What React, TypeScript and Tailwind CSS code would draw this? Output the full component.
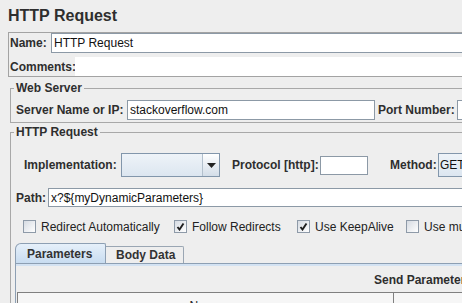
import React from "react";

const input = "border border-[#8c99a6] bg-white px-[2px] text-[12px] leading-[16px] font-normal text-[#111]";

function Check({ on, label, w }: { on?: boolean; label: string; w: string }) {
  return (
    <div className={`flex shrink-0 items-center gap-[5px] ${w}`}>
      <span className="flex h-[13px] w-[13px] shrink-0 items-end justify-center border border-[#8e9aa8] bg-gradient-to-br from-[#d6dbe2] to-white pb-[1px]">
        {on && (
          <svg width="9" height="9" viewBox="0 0 9 9">
            <path d="M1.5 5 L3.5 7.5 L7.5 1.5" fill="none" stroke="#1e1e1e" strokeWidth="1.9" />
          </svg>
        )}
      </span>
      <span className="whitespace-nowrap font-normal text-[#222]">{label}</span>
    </div>
  );
}

function Combo({ w, text }: { w: string; text?: string }) {
  return (
    <div className={`flex h-[24px] shrink-0 border border-[#8296ab] bg-gradient-to-b from-[#eef3f8] to-[#dce6f0] ${w}`}>
      <div className="flex flex-1 items-center pl-[1px] font-normal text-[#111]">{text}</div>
      {!text && (
        <div className="flex w-[17px] items-center justify-center border-l border-[#b3c0cd] bg-gradient-to-b from-white to-[#d3dde8]">
          <svg width="9" height="5" viewBox="0 0 9 5">
            <path d="M0 0h9L4.5 5z" fill="#222" />
          </svg>
        </div>
      )}
    </div>
  );
}

export default function App() {
  return (
    <div className="h-[303px] w-[462px] overflow-hidden bg-[#eeeeee] font-['Liberation_Sans',Arial,sans-serif] text-[12px] font-bold leading-[14px] text-[#2e2e2e]">
      <div className="w-[900px]">
        <h1 className="h-[32px] pl-2 pt-[6px] text-[16px] leading-[20px] font-bold">HTTP Request</h1>

        {/* name / comments */}
        <div className="ml-2 flex flex-col gap-[4px] border border-[#a3a3a3]">
          <div className="flex h-[20px] items-center pl-px">
            <span className="w-[41px] shrink-0">Name:</span>
            <div className={`flex h-full flex-1 items-center ${input}`}>HTTP Request</div>
          </div>
          <div className="flex h-[19px] items-center pl-px">
            <span className="w-[65px] shrink-0 whitespace-nowrap">Comments:</span>
            <div className="h-full flex-1 bg-white" />
          </div>
        </div>

        {/* web server */}
        <fieldset className="ml-[10px] mt-[4px] border border-[#a8a8a8] pb-[2px]">
          <legend className="ml-[3px] px-[2px] leading-[14px]">Web Server</legend>
          <div className="mt-[5px] flex h-[20px] items-center pl-[5px]">
            <span className="w-[111px] shrink-0 whitespace-nowrap">Server Name or IP:</span>
            <div className={`flex h-full w-[248px] shrink-0 items-center ${input}`}>stackoverflow.com</div>
            <span className="ml-[3px] w-[79px] shrink-0 whitespace-nowrap">Port Number:</span>
            <div className={`h-full w-[80px] ${input}`} />
          </div>
        </fieldset>

        {/* http request */}
        <fieldset className="ml-[10px] mt-[2px] border border-[#a8a8a8] pb-10">
          <legend className="ml-[3px] px-[2px] leading-[14px]">HTTP Request</legend>

          <div className="mt-[14px] flex h-[24px] items-center pl-[13px]">
            <span className="w-[97px] shrink-0 whitespace-nowrap">Implementation:</span>
            <Combo w="w-[99px]" />
            <span className="ml-[12px] w-[88px] shrink-0 whitespace-nowrap">Protocol [http]:</span>
            <div className={`h-[19px] w-[48px] shrink-0 ${input}`} />
            <span className="ml-[22px] w-[48px] shrink-0 whitespace-nowrap">Method:</span>
            <Combo w="w-[90px]" text="GET" />
          </div>

          <div className="mt-[11px] flex h-[19px] items-center pl-[5px]">
            <span className="w-[32px] shrink-0">Path:</span>
            <div className={`flex h-full flex-1 items-center ${input}`}>x?${"{"}myDynamicParameters{"}"}</div>
          </div>

          <div className="mt-[13px] flex h-[13px] items-center pl-[12px]">
            <Check label="Redirect Automatically" w="w-[151px]" />
            <Check on label="Follow Redirects" w="w-[123px]" />
            <Check on label="Use KeepAlive" w="w-[109px]" />
            <Check label="Use multipart/form-data for POST" w="w-[260px]" />
          </div>

          {/* tabs */}
          <div className="mt-[10px] pl-[4px]">
            <div className="flex h-[20px] items-end">
              <div className="flex h-[20px] w-[91px] items-center rounded-tl-[6px] rounded-tr-[2px] border border-b-0 border-[#8d9fb3] bg-gradient-to-b from-[#e6f0fa] to-[#c8dcf0] pl-[11px] text-[#333]">
                Parameters
              </div>
              <div className="flex h-[17px] w-[78px] items-center rounded-tr-[2px] border border-b-0 border-l-0 border-[#9aa6b3] pl-[10px] text-[#333]">
                Body Data
              </div>
            </div>
            <div className="border-l border-t border-[#8d9fb3]">
              <div className="h-[2px] bg-[#d3e2f2]" />
              <div className="mt-[7px] whitespace-nowrap pl-[358px] text-[#2e2e2e]">Send Parameters With the Request:</div>
              <div className="ml-px mt-[5px] flex h-[20px] border-l border-t border-[#808080] bg-[#f6f6f6]">
                <div className="flex w-[376px] justify-center border-r border-[#808080] pt-[6px] font-normal text-[#222]">Name</div>
                <div className="flex w-[200px] justify-center pt-[6px] font-normal text-[#222]">Value</div>
              </div>
            </div>
          </div>
        </fieldset>
      </div>
    </div>
  );
}
